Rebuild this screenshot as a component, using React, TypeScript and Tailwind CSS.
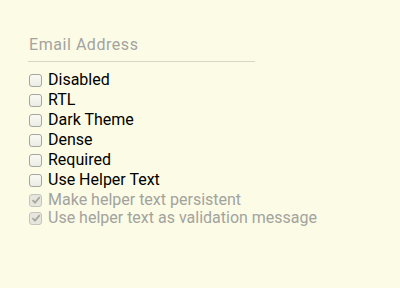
import React from 'react';

const options = [
  { label: 'Disabled' },
  { label: 'RTL' },
  { label: 'Dark Theme' },
  { label: 'Dense' },
  { label: 'Required' },
  { label: 'Use Helper Text' },
  { label: 'Make helper text persistent', disabled: true, checked: true },
  { label: 'Use helper text as validation message', disabled: true, checked: true, last: true },
];

function Box({ checked, disabled }: { checked?: boolean; disabled?: boolean }) {
  return (
    <span
      className={`flex items-center justify-center w-[13px] h-[13px] rounded-[3px] border ${
        disabled ? 'border-[#c4c4bc] bg-[#e6e6de]' : 'border-[#a4a4a0] bg-gradient-to-b from-[#fbfbf6] to-[#ececE6]'
      }`}
    >
      {checked && (
        <svg width="10" height="10" viewBox="0 0 10 10">
          <path d="M1.5 5.2 L4 7.7 L8.7 2.2" fill="none" stroke="#a8a8a0" strokeWidth="1.8" />
        </svg>
      )}
    </span>
  );
}

export default function App() {
  return (
    <div
      className="w-[400px] h-[288px] bg-[#fbfbe6] pl-[28px] pt-[33px]"
      style={{ fontFamily: 'Roboto, "Liberation Sans", sans-serif' }}
    >
      {/* text field */}
      <div className="w-[227px] border-b border-[#d6d6c8] pb-[4px]">
        <span className="ml-[1px] text-[16px] leading-[19px] tracking-[0.55px] text-[#a3a3a0]">Email Address</span>
      </div>

      {/* options */}
      <div className="mt-[8px] flex flex-col">
        {options.map((o) => (
          <label key={o.label} className={`flex items-center ${o.last ? 'h-[16px]' : 'h-[20px]'}`}>
            <span className="ml-[1px]">
              <Box checked={o.checked} disabled={o.disabled} />
            </span>
            <span
              className={`ml-[6px] text-[16px] leading-[20px] ${o.disabled ? 'text-[#a3a39e]' : 'text-black'}`}
            >
              {o.label}
            </span>
          </label>
        ))}
      </div>
    </div>
  );
}
